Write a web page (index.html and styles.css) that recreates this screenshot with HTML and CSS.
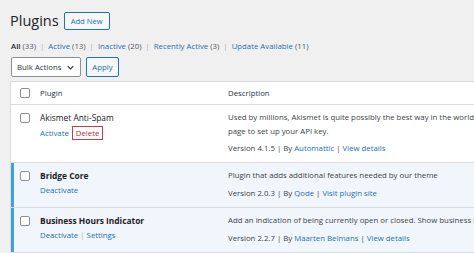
FILE: index.html
```html
<!DOCTYPE html>
<html>
<head>
<meta charset="utf-8">
<link rel="stylesheet" href="styles.css">
</head>
<body>
<div class="wrap">
  <div class="heading">
    <h1 class="title">Plugins</h1>
    <span class="btn-outline add">Add New</span>
  </div>
  <ul class="filters">
    <li><span class="current">All</span> <span class="count">(33)</span></li>
    <li class="sep">|</li>
    <li><a>Active</a> <span class="count">(13)</span></li>
    <li class="sep">|</li>
    <li><a>Inactive</a> <span class="count">(20)</span></li>
    <li class="sep">|</li>
    <li><a>Recently Active</a> <span class="count">(3)</span></li>
    <li class="sep">|</li>
    <li><a>Update Available</a> <span class="count">(11)</span></li>
  </ul>
  <div class="actions">
    <span class="select">Bulk Actions <svg class="chev" viewBox="0 0 10 6" width="7" height="5"><path d="M1 1l4 4 4-4" fill="none" stroke="#2c3338" stroke-width="1.5"/></svg></span>
    <span class="btn-outline apply">Apply</span>
  </div>
  <table class="plugins">
    <colgroup>
      <col class="c-check">
      <col class="c-name">
      <col class="c-desc">
    </colgroup>
    <thead>
      <tr>
        <th class="check"><span class="cb"></span></th>
        <th class="name">Plugin</th>
        <th class="desc">Description</th>
      </tr>
    </thead>
    <tbody>
      <tr class="inactive">
        <td class="check"><span class="cb"></span></td>
        <td class="name">
          <div class="pname">Akismet Anti-Spam</div>
          <div class="row-actions"><a>Activate</a> <a class="delete">Delete</a></div>
        </td>
        <td class="desc">
          <p class="text">Used by millions, Akismet is quite possibly the best way in the world to protect your blog from spam. To get started: activate the Akismet plugin and then go to your Akismet Settings<br>page to set up your API key.</p>
          <p class="meta">Version 4.1.5 | By <a>Automattic</a> | <a>View details</a></p>
        </td>
      </tr>
      <tr class="active">
        <td class="check"><span class="cb"></span></td>
        <td class="name">
          <div class="pname strong">Bridge Core</div>
          <div class="row-actions"><a>Deactivate</a></div>
        </td>
        <td class="desc">
          <p class="text">Plugin that adds additional features needed by our theme</p>
          <p class="meta">Version 2.0.3 | By <a>Qode</a> | <a>Visit plugin site</a></p>
        </td>
      </tr>
      <tr class="active">
        <td class="check"><span class="cb"></span></td>
        <td class="name">
          <div class="pname strong">Business Hours Indicator</div>
          <div class="row-actions"><a>Deactivate</a> <span class="bar">|</span> <a>Settings</a></div>
        </td>
        <td class="desc">
          <p class="text">Add an indication of being currently open or closed. Show business hours and exceptions.</p>
          <p class="meta">Version 2.2.7 | By <a>Maarten Belmans</a> | <a>View details</a></p>
        </td>
      </tr>
    </tbody>
  </table>
</div>
</body>
</html>
```
FILE: styles.css
```css
html, body {
  margin: 0;
  padding: 0;
  background: #f0f0f1;
  overflow: hidden;
  width: 474px;
  height: 253px;
}
body {
  font-family: "Open Sans", "Noto Sans", sans-serif;
  font-size: 7.8px;
  color: #3c434a;
}
a { color: #2271b1; }
.wrap {
  padding: 12px 0 0 10px;
  width: 640px;
}
.heading {
  display: flex;
  align-items: center;
  gap: 5px;
  height: 18px;
}
.title {
  margin: 0;
  font-size: 14.5px;
  font-weight: 400;
  color: #1d2327;
  line-height: 18px;
}
.btn-outline {
  display: inline-flex;
  align-items: center;
  justify-content: center;
  box-sizing: border-box;
  border: 1px solid #2271b1;
  border-radius: 2px;
  color: #2271b1;
  background: #f6f7f7;
  white-space: nowrap;
}
.add { width: 46px; height: 18px; font-size: 7.6px; }
.filters {
  list-style: none;
  margin: 10px 0 0 1px;
  padding: 0;
  display: flex;
  gap: 4px;
  line-height: 12px;
  white-space: nowrap;
}
.filters .current { color: #1d2327; font-weight: 600; }
.filters .count { color: #50575e; }
.filters .sep { color: #a7aaad; }
.actions {
  display: flex;
  gap: 5px;
  margin: 5px 0 0 1px;
}
.select {
  display: inline-flex;
  align-items: center;
  justify-content: space-between;
  height: 20px;
  box-sizing: border-box;
  border: 1px solid #8c8f94;
  border-radius: 2px;
  background: #fff;
  padding: 0 6px 0 5px;
  color: #2c3338;
  width: 70px;
  white-space: nowrap;
}
.apply { height: 20px; width: 33px; }
.plugins {
  margin-top: 4px;
  border-collapse: separate;
  border-spacing: 0;
  background: #fff;
  border: 1px solid #dcdcde;
  width: 640px;
  table-layout: fixed;
}
.c-check { width: 22px; }
.c-name { width: 188px; }
.plugins th, .plugins td {
  text-align: left;
  vertical-align: top;
  padding: 0;
  border-bottom: 1px solid #dcdcde;
}
.plugins thead th {
  font-weight: 400;
  color: #2c3338;
  height: 22px;
  vertical-align: middle;
}
.plugins th.name, .plugins th.desc { padding-left: 7px; }
.plugins thead .check { padding-left: 9px; }
.plugins tbody .check { padding: 8px 0 0 9px; }
.cb {
  display: block;
  width: 10px;
  height: 10px;
  box-sizing: border-box;
  border: 1px solid #8c8f94;
  border-radius: 2px;
  background: #fff;
}
.plugins td.name { padding: 6px 7px 6px 7px; }
.plugins td.desc { padding: 5px 7px 7px 7px; }
.pname { color: #1d2327; font-size: 8.4px; line-height: 13px; white-space: nowrap; }
.pname.strong { font-weight: 700; }
.row-actions { margin-top: 2px; line-height: 13px; white-space: nowrap; }
.row-actions .bar { color: #a7aaad; }
.delete {
  display: inline-block;
  color: #b32d2e;
  border: 1.5px solid #d63646;
  padding: 0 3px;
  line-height: 12px;
  margin-left: 1px;
}
.text {
  margin: 0;
  line-height: 14px;
  color: #3c434a;
  white-space: nowrap;
}
.meta {
  margin: 3px 0 0 0;
  line-height: 14px;
  color: #3c434a;
  white-space: nowrap;
}
tr.active .meta { margin-top: 4px; }
tr.active td { background: #f0f6fc; }
tr.active td.check { box-shadow: inset 3px 0 0 #3ea3d8; }
```
